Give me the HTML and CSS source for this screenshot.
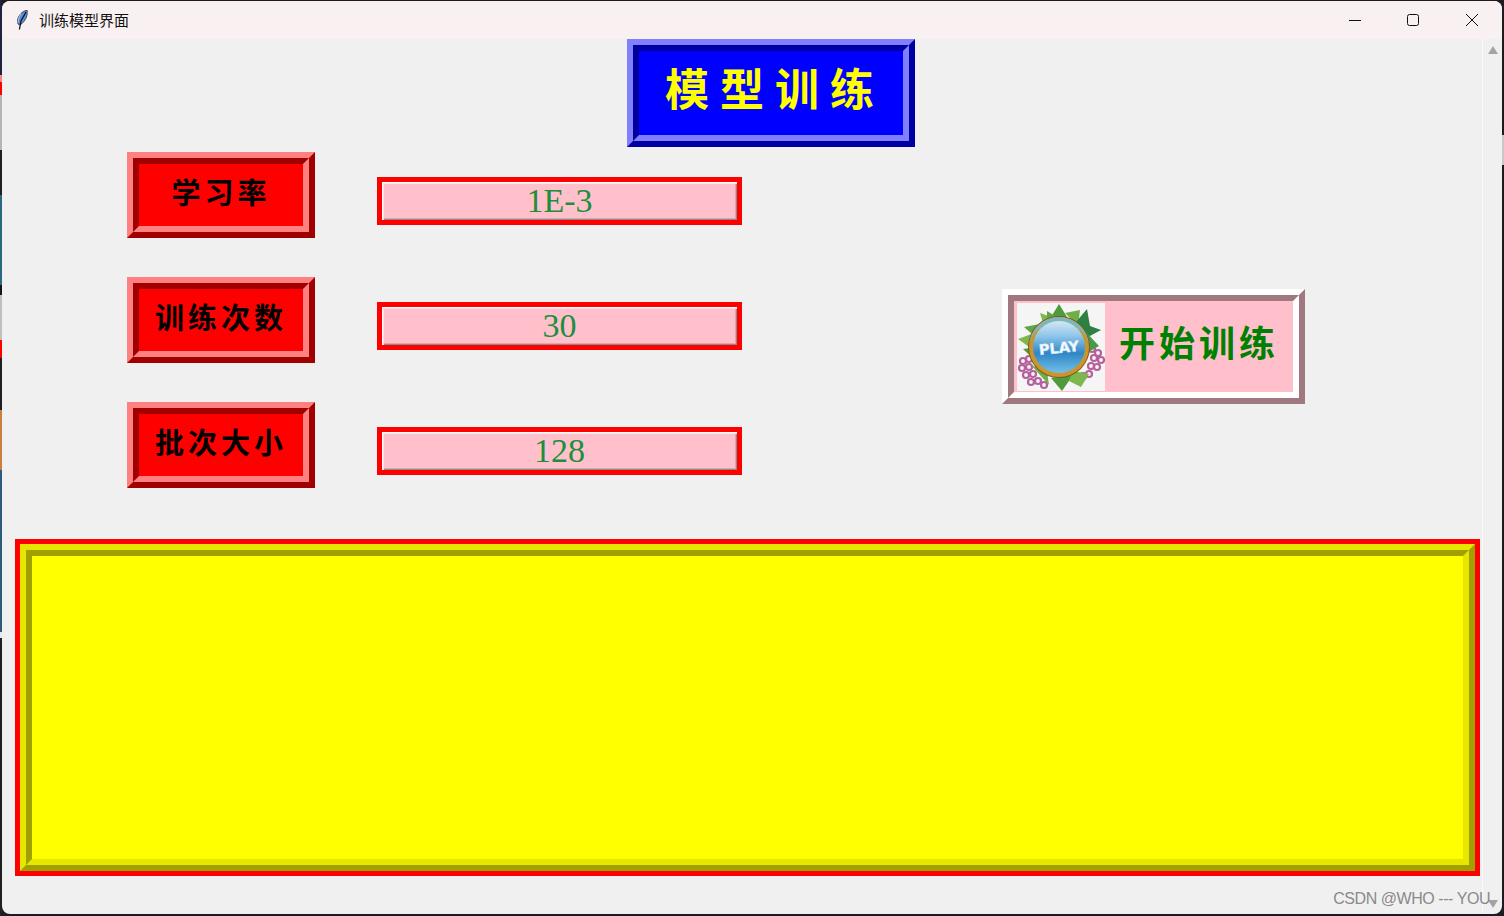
FILE: index.html
```html
<!DOCTYPE html>
<html lang="zh-CN">
<head>
  <meta charset="UTF-8">
  <title>训练模型界面</title>
  <link rel="stylesheet" href="styles.css">
</head>
<body>
  <div class="window">
    <div class="titlebar">
      <svg class="app-icon" width="12" height="20" viewBox="0 0 12 20">
        <path d="M2 14C0 9 4 2 11 0c1 5-1 11-7 15z" fill="#5b8fd6" stroke="#27324a" stroke-width="0.8"/>
        <path d="M5 4c-2 3-3 6-3 9" fill="none" stroke="#a9c7ee" stroke-width="1"/>
        <path d="M10 2L5 11 3.4 19.5" fill="none" stroke="#10141f" stroke-width="1.3"/>
      </svg>
      <span class="window-title">训练模型界面</span>
      <div class="window-controls">
        <svg width="57" height="14" viewBox="0 0 57 14"><path d="M0 7.5h12" stroke="#111" fill="none"/></svg>
        <svg width="59" height="14" viewBox="0 0 59 14"><rect x="1.5" y="1.5" width="11" height="11" rx="2" stroke="#111" fill="none"/></svg>
        <svg width="14" height="14" viewBox="0 0 14 14"><path d="M1 1l12 12M13 1L1 13" stroke="#111" fill="none"/></svg>
      </div>
    </div>
    <div class="content">
      <div class="canvas">
        <div class="heading-row">
          <div class="ridge blue"><div class="ridge-inner blue heading">模型训练</div></div>
        </div>
        <div class="main-row">
          <div class="params">
            <div class="param-row">
              <div class="ridge red"><div class="ridge-inner red param-label">学习率</div></div>
              <div class="entry">1E-3</div>
            </div>
            <div class="param-row">
              <div class="ridge red"><div class="ridge-inner red param-label">训练次数</div></div>
              <div class="entry">30</div>
            </div>
            <div class="param-row">
              <div class="ridge red"><div class="ridge-inner red param-label">批次大小</div></div>
              <div class="entry">128</div>
            </div>
          </div>
          <div class="ridge start">
            <div class="ridge-inner start start-body">
              <svg class="play-icon" width="88" height="88" viewBox="0 0 88 88">
                <defs>
                  <filter id="soft"><feGaussianBlur stdDeviation="0.5"/></filter>
                  <linearGradient id="globe" x1="0" y1="0" x2="0" y2="1">
                    <stop offset="0" stop-color="#d3e8f5"/>
                    <stop offset="0.3" stop-color="#8cc4e8"/>
                    <stop offset="0.62" stop-color="#2f86c6"/>
                    <stop offset="1" stop-color="#74c0e8"/>
                  </linearGradient>
                </defs>
                <rect width="88" height="88" fill="#f5f5f5"/>
                <g filter="url(#soft)">
                  <g fill="none" stroke="#b5619c" stroke-width="2.2">
                    <circle cx="6" cy="58" r="3"/><circle cx="12" cy="56" r="3"/><circle cx="5" cy="65" r="3"/>
                    <circle cx="12" cy="64" r="3"/><circle cx="9" cy="72" r="3"/><circle cx="16" cy="71" r="3"/>
                    <circle cx="14" cy="79" r="3"/><circle cx="21" cy="78" r="3"/><circle cx="27" cy="82" r="3"/>
                    <circle cx="75" cy="46" r="3"/><circle cx="81" cy="50" r="3"/><circle cx="84" cy="57" r="3"/>
                    <circle cx="77" cy="55" r="3"/><circle cx="80" cy="64" r="3"/><circle cx="74" cy="63" r="3"/>
                    <circle cx="72" cy="71" r="3"/><circle cx="66" cy="73" r="3"/>
                  </g>
                  <path d="M42 1l8 13-16 0z" fill="#4f9a3e"/>
                  <path d="M23 10l14 5-9 12z" fill="#7db84e"/>
                  <path d="M30 8l10 6-10 4z" fill="#5fa548"/>
                  <path d="M48 10l15-3-2 16z" fill="#6fae47"/>
                  <path d="M70 6l3 17 11 4-13 7-12-15z" fill="#2f7f43"/>
                  <path d="M7 24l16-3 1 18z" fill="#5fa548"/>
                  <path d="M1 36l19-7 2 22z" fill="#7db84e"/>
                  <path d="M6 46l15-2 2 18z" fill="#4f9a3e"/>
                  <path d="M68 28l14 15-14 8z" fill="#4c9a48"/>
                  <path d="M14 62l16 6 2 14z" fill="#6fae47"/>
                  <path d="M45 88l-11-13 22-3z" fill="#4f9a3e"/>
                  <path d="M56 68l16 3-8 13-12-6z" fill="#7db84e"/>
                  <circle cx="42" cy="44" r="31" fill="#7a5a20"/>
                  <circle cx="42" cy="44" r="30" fill="#c9962e"/>
                  <path d="M12 44a30 30 0 0 1 60 0a30 24 0 0 0-60 0z" fill="#7fb7b8"/>
                  <circle cx="42" cy="44" r="26" fill="url(#globe)"/>
                </g>
                <text class="play-text" x="42" y="50" text-anchor="middle" transform="rotate(-6 42 46)">PLAY</text>
              </svg>
              <span class="start-label">开始训练</span>
            </div>
          </div>
        </div>
        <div class="output"><div class="ridge yellow"><div class="ridge-inner yellow output-area"></div></div></div>
      </div>
      <div class="scrollbar">
        <span class="arrow-up"></span>
        <span class="arrow-down"></span>
      </div>
    </div>
    <div class="watermark">CSDN @WHO --- YOU</div>
  </div>
</body>
</html>
```

FILE: styles.css
```css
html, body {
  margin: 0;
  height: 100%;
}
/* the desktop showing round the window */
body {
  background:
    linear-gradient(#1f2340 0 75px, #ff8080 75px 82px, #ff0000 82px 95px, #b5b5b5 95px 150px, #202020 150px 195px, #2a6a80 195px 285px, #151515 285px 295px, #c0c0c0 295px 340px, #ff0000 340px 358px, #202024 358px 410px, #c8803c 410px 470px, #2d5a78 470px 632px, #e8e8e8 632px 638px, #202020 638px) left top / 2px 100% no-repeat,
    linear-gradient(#1c1c20 0 135px, #c8c8c8 135px 165px, #1c1c20 165px) right top / 2px 100% no-repeat,
    #1c1c1e;
  overflow: hidden;
  font-family: "Noto Sans CJK SC", sans-serif;
}
.window {
  position: relative;
  box-sizing: border-box;
  width: 1500px;
  height: 913px;
  margin: 1px 0 0 2px;
  border-radius: 8px;
  overflow: hidden;
  background: #f0f0f0;
}
.titlebar {
  display: flex;
  align-items: center;
  box-sizing: border-box;
  height: 38px;
  padding: 0 0 1px 14px;
  background: #f9f0f2;
}
.window-title {
  margin-left: 11px;
  font-size: 15px;
  color: #111;
}
.window-controls {
  display: flex;
  align-items: center;
  margin-left: auto;
  padding-right: 23px;
}
.content {
  display: flex;
  height: 875px;
}
.canvas {
  width: 1480px;
  padding-left: 13px;
  box-sizing: border-box;
}
.scrollbar {
  display: flex;
  flex-direction: column;
  justify-content: space-between;
  align-items: center;
  width: 20px;
  padding: 7px 0 6px;
  box-sizing: border-box;
  border-left: 1px solid #fbfbfb;
}
.arrow-up, .arrow-down {
  border-left: 5px solid transparent;
  border-right: 5px solid transparent;
}
.arrow-up {
  border-bottom: 8px solid #a3a3a3;
}
.arrow-down {
  border-top: 8px solid #a3a3a3;
}

/* tk ridge relief: two nested mitred borders */
.ridge, .ridge-inner {
  border: 6px solid;
  box-sizing: border-box;
}
.ridge.blue { border-color: #8080ff #0000a0 #0000a0 #8080ff; }
.ridge-inner.blue { border-color: #0000a0 #8080ff #8080ff #0000a0; background: #0000ff; }
.ridge.red { border-color: #ff8080 #a00000 #a00000 #ff8080; }
.ridge-inner.red { border-color: #a00000 #ff8080 #ff8080 #a00000; background: #ff0000; }
.ridge.start { border-color: #ffffff #a07880 #a07880 #ffffff; }
.ridge-inner.start { border-color: #a07880 #ffffff #ffffff #a07880; background: #ffc0cb; }
.ridge.yellow { border-color: #e6e600 #a0a000 #a0a000 #e6e600; }
.ridge-inner.yellow { border-color: #a0a000 #e6e600 #e6e600 #a0a000; background: #ffff00; }

.heading-row {
  display: flex;
  padding-left: 612px;
}
.heading-row .ridge {
  width: 288px;
  height: 108px;
}
.heading {
  display: flex;
  align-items: center;
  justify-content: center;
  box-sizing: border-box;
  height: 100%;
  padding: 0 0 12px 8px;
  color: #ffff00;
  font-size: 44px;
  font-weight: 700;
  letter-spacing: 11px;
}
.main-row {
  display: flex;
  padding-left: 112px;
}
.params {
  display: flex;
  flex-direction: column;
  gap: 39px;
  padding-top: 5px;
}
.param-row {
  display: flex;
  gap: 62px;
  height: 86px;
}
.param-row .ridge {
  width: 188px;
  height: 86px;
}
.param-label {
  display: flex;
  align-items: center;
  justify-content: center;
  height: 100%;
  padding-bottom: 8px;
  box-sizing: border-box;
  color: #000;
  font-size: 29px;
  font-weight: 700;
  letter-spacing: 4px;
}
.entry {
  box-sizing: border-box;
  align-self: flex-start;
  width: 365px;
  height: 48px;
  margin-top: 25px;
  border: 5px solid #ff0000;
  background: #ffc0cb;
  box-shadow: inset 1px 1px 0 #ffffff, inset 2px 2px 0 #ffe0e6, inset -1px -1px 0 #8a8a8a, inset -2px -2px 0 #d8a8b0;
  color: #1c8f3c;
  font-family: "Liberation Serif", serif;
  font-size: 34px;
  line-height: 38px;
  text-align: center;
}
.ridge.start {
  align-self: flex-start;
  width: 303px;
  height: 115px;
  margin-top: 142px;
  margin-left: 260px;
}
.start-body {
  display: flex;
  align-items: center;
  height: 100%;
  padding-left: 3px;
}
.play-text {
  fill: #f6fafd;
  stroke: #cfe4f2;
  stroke-width: 0.5;
  font-family: "DejaVu Sans", sans-serif;
  font-size: 14.5px;
  font-weight: 700;
}
.start-label {
  margin: 0 0 12px 14px;
  color: #008000;
  font-size: 36px;
  font-weight: 700;
  letter-spacing: 4px;
}
.output {
  box-sizing: border-box;
  width: 1465px;
  height: 337px;
  margin-top: 51px;
  border: 5px solid #ff0000;
}
.output .ridge {
  height: 100%;
}
.output-area {
  height: 100%;
}
.watermark {
  position: absolute;
  right: 12px;
  bottom: 6px;
  color: #8a8a8a;
  font-family: "Liberation Sans", sans-serif;
  font-size: 16px;
  letter-spacing: -0.45px;
}
```
